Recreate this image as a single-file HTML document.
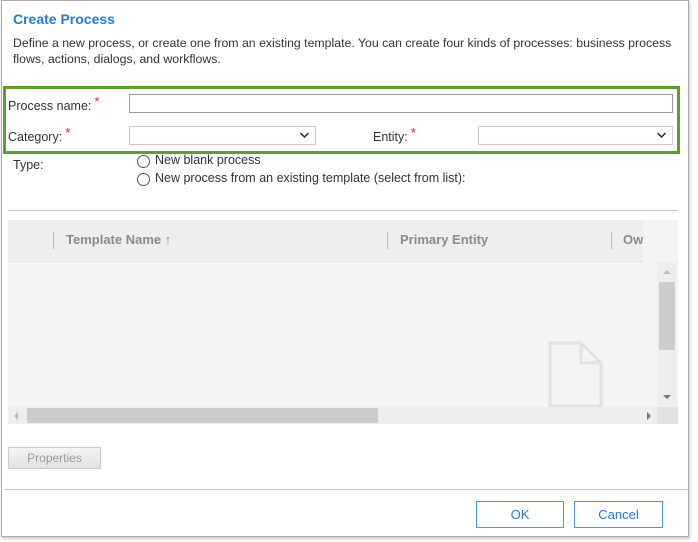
<!DOCTYPE html>
<html><head><meta charset="utf-8"><style>
*{margin:0;padding:0;box-sizing:border-box}
body{width:698px;height:542px;background:#fff;font-family:"Segoe UI","Liberation Sans",sans-serif;color:#333;position:relative;overflow:hidden}
.a{position:absolute}
.t{font-size:12.5px;white-space:nowrap}
.star{color:#d22;font-size:13px;position:relative;top:-4px;margin-left:3px}
.sel{border:1px solid #ccc;background:#fff}
.chev{position:absolute;right:6px;top:4px;width:9px;height:8px}
.radio{width:13px;height:13px;border:1px solid #555;border-radius:50%;background:#fff}
.hd{font-size:13px;color:#8a8a8a;font-weight:bold;white-space:nowrap}
.sep{width:1px;height:17px;background:#bbb}
</style></head><body>
<div class="a" style="left:1px;top:0;width:688px;height:537px;border:1px solid #aaa;box-shadow:1px 2px 3px #ccc"></div>
<div class="a" style="left:13px;top:11px;font-size:14px;font-weight:bold;color:#2a7ad2">Create Process</div>
<div class="a t" style="left:13px;top:35px;font-size:12.3px;color:#333;line-height:16px">Define a new process, or create one from an existing template. You can create four kinds of processes: business process<br>flows, actions, dialogs, and workflows.</div>
<div class="a" style="left:3px;top:86px;width:677px;height:68px;border:3px solid #5d9f2c"></div>
<div class="a t" style="left:8px;top:98px">Process name:<span class="star">*</span></div>
<div class="a" style="left:129px;top:94px;width:544px;height:19px;border:1px solid #999;background:#fff"></div>
<div class="a t" style="left:8px;top:129px">Category:<span class="star">*</span></div>
<div class="a sel" style="left:129px;top:126px;width:187px;height:19px"><svg class="chev" viewBox="0 0 9 8"><path d="M0.5 2L4.5 6L8.5 2" fill="none" stroke="#222" stroke-width="1.5"/></svg></div>
<div class="a t" style="left:373px;top:129px">Entity:<span class="star">*</span></div>
<div class="a sel" style="left:478px;top:126px;width:195px;height:19px"><svg class="chev" viewBox="0 0 9 8"><path d="M0.5 2L4.5 6L8.5 2" fill="none" stroke="#222" stroke-width="1.5"/></svg></div>
<div class="a t" style="left:13px;top:158px">Type:</div>
<div class="a radio" style="left:137px;top:155px"></div>
<div class="a t" style="left:155px;top:153px">New blank process</div>
<div class="a radio" style="left:137px;top:173px"></div>
<div class="a t" style="left:155px;top:171px">New process from an existing template (select from list):</div>
<div class="a" style="left:8px;top:210px;width:670px;height:1px;background:#c8c8c8"></div>
<div class="a" style="left:8px;top:220px;width:670px;height:204px;background:#f5f4f5"></div>
<div class="a" style="left:8px;top:220px;width:635px;height:42px;background:#efeeef;border-bottom:1px solid #e2e2e2"></div>
<div class="a sep" style="left:53px;top:232px"></div>
<div class="a hd" style="left:66px;top:232px">Template Name ↑</div>
<div class="a sep" style="left:387px;top:232px"></div>
<div class="a hd" style="left:400px;top:232px">Primary Entity</div>
<div class="a sep" style="left:611px;top:232px"></div>
<div class="a hd" style="left:623px;top:232px">Ow</div>
<div class="a" style="left:657px;top:262px;width:20px;height:145px;background:#efeeef"></div>
<div class="a" style="left:659px;top:282px;width:16px;height:68px;background:#cdcccd"></div>
<div class="a" style="left:663px;top:270px;width:0;height:0;border:4px solid transparent;border-bottom-color:#bbb;border-top:0"></div>
<div class="a" style="left:663px;top:395px;width:0;height:0;border:4px solid transparent;border-top-color:#777;border-bottom:0"></div>
<div class="a" style="left:8px;top:407px;width:649px;height:17px;background:#efeeef"></div>
<div class="a" style="left:657px;top:407px;width:21px;height:17px;background:#e2e1e2"></div>
<div class="a" style="left:27px;top:408px;width:351px;height:15px;background:#cdcccd"></div>
<div class="a" style="left:14px;top:412px;width:0;height:0;border:4px solid transparent;border-right-color:#bbb;border-left:0"></div>
<div class="a" style="left:647px;top:412px;width:0;height:0;border:4px solid transparent;border-left-color:#777;border-right:0"></div>
<svg class="a" style="left:548px;top:341px" width="55" height="66" viewBox="0 0 55 66"><path d="M2 2H33L53 22V65H2Z M33 2V22H53" fill="none" stroke="#e3e2e3" stroke-width="3"/></svg>
<div class="a" style="left:8px;top:447px;width:93px;height:22px;border:1px solid #ccc;background:linear-gradient(#f4f4f4,#e2e2e2);color:#999;font-size:12px;text-align:center;line-height:20px">Properties</div>
<div class="a" style="left:4px;top:489px;width:684px;height:1px;background:#c8c8c8"></div>
<div class="a" style="left:476px;top:501px;width:88px;height:27px;border:1px solid #4a9ae0;background:#fff;color:#2a7ad2;font-size:13px;text-align:center;line-height:25px">OK</div>
<div class="a" style="left:574px;top:501px;width:89px;height:27px;border:1px solid #4a9ae0;background:#fff;color:#2a7ad2;font-size:13px;text-align:center;line-height:25px">Cancel</div>
</body></html>
